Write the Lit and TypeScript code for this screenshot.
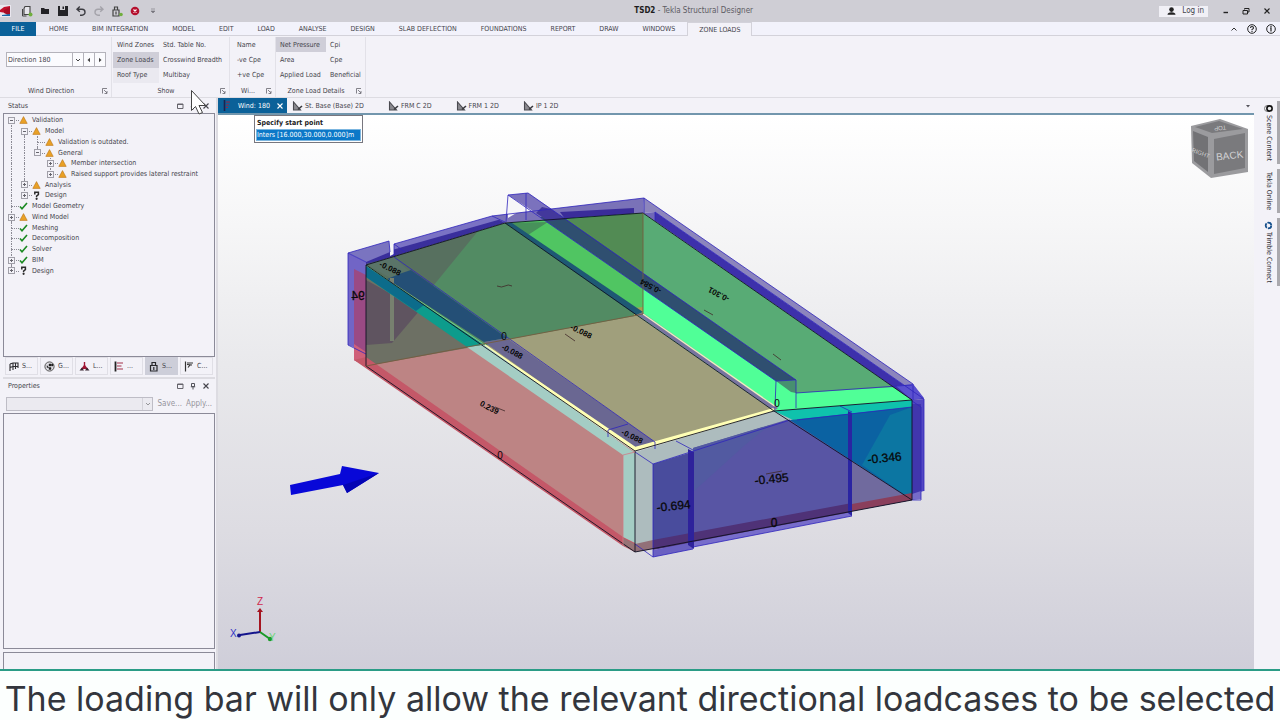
import { LitElement, html, svg, css, nothing } from "lit";
import { customElement, state } from "lit/decorators.js";
import { classMap } from "lit/directives/class-map.js";

type Mark = "warn" | "ok" | "query";
interface TreeRow {
  text: string;
  mark: Mark;
  toggle?: "+" | "-";
  // one entry per level: "|" runs through, "L" ends at this row, "T" starts at this row, " " is empty
  guides: string;
}

const TABS = ["HOME", "BIM INTEGRATION", "MODEL", "EDIT", "LOAD", "ANALYSE", "DESIGN", "SLAB DEFLECTION", "FOUNDATIONS", "REPORT", "DRAW", "WINDOWS", "ZONE LOADS"];
const DOCS = ["St. Base (Base) 2D", "FRM C 2D", "FRM 1 2D", "IP 1 2D"];

const TREE: TreeRow[] = [
  { text: "Validation", mark: "warn", toggle: "-", guides: "T" },
  { text: "Model", mark: "warn", toggle: "-", guides: "|T" },
  { text: "Validation is outdated.", mark: "warn", guides: "|||" },
  { text: "General", mark: "warn", toggle: "-", guides: "||L" },
  { text: "Member intersection", mark: "warn", toggle: "+", guides: "|| |" },
  { text: "Raised support provides lateral restraint", mark: "warn", toggle: "+", guides: "|| L" },
  { text: "Analysis", mark: "warn", toggle: "+", guides: "||" },
  { text: "Design", mark: "query", toggle: "+", guides: "|L" },
  { text: "Model Geometry", mark: "ok", guides: "|" },
  { text: "Wind Model", mark: "warn", toggle: "+", guides: "|" },
  { text: "Meshing", mark: "ok", guides: "|" },
  { text: "Decomposition", mark: "ok", guides: "|" },
  { text: "Solver", mark: "ok", guides: "|" },
  { text: "BIM", mark: "ok", toggle: "+", guides: "|" },
  { text: "Design", mark: "query", toggle: "+", guides: "L" },
];

const shared = css`
  * { box-sizing: border-box; }
  button, select, input {
    font: inherit;
    color: inherit;
    margin: 0;
    padding: 0;
    border: 0;
    border-radius: 0;
    background: none;
    appearance: none;
  }
  svg { display: block; flex: none; }
`;

const icon = {
  logo: svg`<svg width="11" height="12" viewBox="0 0 11 12"><rect width="11" height="12" fill="#e9e6ee"/><path d="M0 5l4-3 6-1v6l-4 1-6-1z" fill="#c2102c"/><path d="M4 5l6-3v7l-2 1-4-2z" fill="#a80c26"/><path d="M2 10l8-1v2H2z" fill="#1667a8"/></svg>`,
  newDoc: svg`<svg width="12" height="12" viewBox="0 0 12 12"><path d="M4 1.5h5v8H3v-6z" fill="#e6e5ea" stroke="#444" stroke-width="1.1"/><path d="M1.500 4v7h4" fill="none" stroke="#444"/><circle cx="9.500" cy="9.500" r="2" fill="#6fae3c"/></svg>`,
  open: svg`<svg width="12" height="12" viewBox="0 0 12 12"><path d="M2 3h3l1 1h4v5H2z" fill="#222226"/></svg>`,
  save: svg`<svg width="12" height="12" viewBox="0 0 12 12"><path d="M1 1h10v10H1z" fill="#242428"/><rect x="3" y="1" width="5" height="4" fill="#cfced4"/><rect x="5.500" y="1.500" width="1.500" height="2.500" fill="#242428"/></svg>`,
  undo: svg`<svg width="12" height="12" viewBox="0 0 12 12"><path d="M2 4.200h5a3 3 0 010 6H5M4.800 1.500L2 4.200l2.800 2.600" fill="none" stroke="#3c3c42" stroke-width="1.400"/></svg>`,
  redo: svg`<svg width="12" height="12" viewBox="0 0 12 12"><path d="M10 4.200H5a3 3 0 000 6h2M7.200 1.500L10 4.200 7.200 6.800" fill="none" stroke="#a4a3aa" stroke-width="1.400"/></svg>`,
  check: svg`<svg width="12" height="12" viewBox="0 0 12 12"><path d="M2 5h6v6H2zM3.500 5V2h3v3M5 6.500v3" fill="none" stroke="#444" stroke-width="1.200"/><circle cx="10" cy="9.500" r="1.800" fill="#6fae3c"/></svg>`,
  stop: svg`<svg width="12" height="12" viewBox="0 0 12 12"><circle cx="6" cy="6" r="4.300" fill="#b5102e"/><path d="M4.500 4.500l3 3m0-3l-3 3" stroke="#fff" stroke-width="1.100"/></svg>`,
  more: svg`<svg width="12" height="6" viewBox="-3 0 12 6"><path d="M1 1h4M1 3h4L3 5z" stroke="#77767e" stroke-width=".6" fill="#77767e"/></svg>`,
  user: svg`<svg width="9" height="8" viewBox="0 0 9 8"><circle cx="4.500" cy="2.600" r="2.300" fill="#222"/><path d="M.5 7.800q0-2.500 4-2.500t4 2.500z" fill="#222"/></svg>`,
  min: svg`<svg width="6" height="8" viewBox="0 0 6 8"><path d="M.5 5.500h4.500" stroke="#222" stroke-width="1.400"/></svg>`,
  restore: svg`<svg width="8" height="8" viewBox="0 0 8 8"><path d="M2.500 2.500v-1h4.500v3.500H5.500M1 3.500h4.500V7H1z" fill="none" stroke="#222"/></svg>`,
  close: svg`<svg width="8" height="8" viewBox="0 0 8 8"><path d="M1.500 1.500l5 5m0-5l-5 5" stroke="#222" stroke-width="1.100"/></svg>`,
  up: svg`<svg width="8" height="8" viewBox="0 0 8 8"><path d="M1.500 5.500L4 3l2.500 2.500" fill="none" stroke="#333"/></svg>`,
  help: svg`<svg width="10" height="10" viewBox="0 0 10 10"><circle cx="5" cy="5" r="4.300" fill="none" stroke="#222"/><path d="M3.500 4q0-1.500 1.500-1.500T6.500 4q0 .8-1.500 1.500v.7M5 7v1" fill="none" stroke="#222" stroke-width="1.100"/></svg>`,
  info: svg`<svg width="10" height="10" viewBox="0 0 10 10"><circle cx="5" cy="5" r="4.300" fill="none" stroke="#222"/><path d="M5 2v1.200M4.200 4.200H5v3.300" fill="none" stroke="#222" stroke-width="1.200"/></svg>`,
  launcher: svg`<svg width="6" height="6" viewBox="0 0 6 6"><path d="M.5 5.500v-5h4.500M2 2l3 3M5 3v2.500H2.500" fill="none" stroke="#66656d" stroke-width=".8"/></svg>`,
  chev: svg`<svg width="6" height="6" viewBox="0 0 6 6"><path d="M1 2l2 2 2-2" fill="none" stroke="#444" stroke-width="1"/></svg>`,
  prev: svg`<svg width="6" height="6" viewBox="0 0 6 6"><path d="M4 .8v4.400L1.500 3z" fill="#444"/></svg>`,
  next: svg`<svg width="6" height="6" viewBox="0 0 6 6"><path d="M2 .8v4.400L4.500 3z" fill="#444"/></svg>`,
  wind: svg`<svg width="9" height="11" viewBox="0 0 9 11"><path d="M1.500 0v11" stroke="#1d2350" stroke-width="1.600"/><path d="M3 2h4M3 5h3M3 7.500h2" stroke="#9c2340" stroke-width="1.200"/></svg>`,
  frame: svg`<svg width="11" height="10" viewBox="0 0 11 10"><path d="M1.500 1v8h7z" fill="#8b8a90" stroke="#4a4a50" stroke-width="1.100"/><path d="M6 8.500l4-3.500" stroke="#39393e" stroke-width="1.600"/></svg>`,
  dock: svg`<svg width="8" height="8" viewBox="0 0 8 8"><path d="M1.500 2h5.500v4.500H1.500zM1.500 2.500H7" fill="none" stroke="#66656d"/></svg>`,
  pin: svg`<svg width="8" height="8" viewBox="0 0 8 8"><path d="M2.500 1.500h3v3h-3zM1.800 4.800h4.400M4 5v2.500" fill="none" stroke="#55545c"/></svg>`,
  x: svg`<svg width="8" height="8" viewBox="0 0 8 8"><path d="M1.500 1.500l5 5m0-5l-5 5" stroke="#44434b" stroke-width="1.100"/></svg>`,
  drop: svg`<svg width="6" height="6" viewBox="0 0 6 6"><path d="M1 2h4L3 4.500z" fill="#55545c"/></svg>`,
  content: svg`<svg width="9" height="9" viewBox="0 0 9 9"><circle cx="3.500" cy="4.500" r="3" fill="none" stroke="#777"/><circle cx="5.500" cy="4.500" r="2.600" fill="#eee" stroke="#111" stroke-width="1.600"/></svg>`,
  trimble: svg`<svg width="9" height="9" viewBox="0 0 9 9"><circle cx="4.500" cy="4.500" r="2.800" fill="none" stroke="#15508c" stroke-width="1.800" stroke-dasharray="4.900 1"/></svg>`,
  tabStruct: svg`<svg width="10" height="11" viewBox="0 0 10 11"><path d="M1 3v7M4 2v7M1 3l3-1h5M4 5.500h5M6.500 2v6M9 1.500V7M1 6.500l3-1" fill="none" stroke="#2c2c30" stroke-width="1.100"/></svg>`,
  tabGroup: svg`<svg width="11" height="11" viewBox="0 0 11 11"><circle cx="5.500" cy="5.500" r="4.600" fill="#dcdbe1" stroke="#555"/><path d="M5 3h2v2H5zM7.500 3H9v2H7.500zM5 6.500h2v2H5zM3 4.500v2h2" fill="#222" stroke="#222" stroke-width=".4"/></svg>`,
  tabLoad: svg`<svg width="11" height="11" viewBox="0 0 11 11"><path d="M5.500 1v4" stroke="#a01634" stroke-width="1.400"/><path d="M5.500 3.500L9 8H2z" fill="#a01634"/><path d="M.5 9.500L3 6.500 5 9.500zM6 9.500l2-3 2.500 3z" fill="#3b2630"/></svg>`,
  tabWind: svg`<svg width="10" height="11" viewBox="0 0 10 11"><path d="M1.500 .5v10" stroke="#222" stroke-width="1.800"/><path d="M3 2h6M3 5h4.500M3 8h6" stroke="#a3304a" stroke-width="1.200"/></svg>`,
  tabStatus: svg`<svg width="10" height="11" viewBox="0 0 10 11"><path d="M1.500 4.500h6.500v5.500H1.500zM3 4.500v-3h3.500v3M4.800 6v3" fill="none" stroke="#28282c" stroke-width="1.200"/></svg>`,
  tabComp: svg`<svg width="10" height="11" viewBox="0 0 10 11"><path d="M1.500 .5v10M3 2h6M3 3.500l5 .5M4 6.500l2-2.500" fill="none" stroke="#333" stroke-width="1.200"/></svg>`,
  warn: svg`<svg width="9" height="8" viewBox="0 0 9 8"><path d="M4.500 .6L8.200 7.400H.8z" fill="#e9a126" stroke="#b9741a" stroke-width=".6"/></svg>`,
  ok: svg`<svg width="9" height="8" viewBox="0 0 9 8"><path d="M1 4.500l2 2.300L8 1" fill="none" stroke="#1b8a22" stroke-width="1.600"/></svg>`,
  query: svg`<svg width="9" height="9" viewBox="0 0 9 9"><path d="M2.800 3.400V1.300h3.600v2.300L4.600 5v1.200" fill="none" stroke="#2b2b2b" stroke-width="1.500"/><circle cx="4.600" cy="7.800" r="1.100" fill="#2b2b2b"/></svg>`,
};

@customElement("ribbon-bar")
class RibbonBar extends LitElement {
  @state() private tab = "ZONE LOADS";

  static styles = [shared, css`
    :host { display: block; color: #45444c; }
    .tabs { display: flex; height: 14px; background: #f2f2fb; border-bottom: 1px solid #d3d2da; }
    .tab { padding: 0 12px; line-height: 14px; height: 14px; white-space: nowrap; }
    .tab.file { width: 36px; padding: 0; background: #0b6199; color: #fff; margin-right: 1px; }
    .tab.on { background: #f3f2f8; border: 1px solid #d3d2da; border-bottom: 0; padding: 0 11px; }
    .tools { margin-left: auto; display: flex; align-items: center; gap: 9px; padding-right: 4px; }
    .ribbon { display: flex; height: 62px; background: #f3f2f8; border-bottom: 1px solid #dddce2; padding-top: 1px; }
    .group { display: flex; flex-direction: column; border-right: 1px solid #e2e1e8; }
    .cells { flex: none; display: grid; height: 46px; grid-template-rows: repeat(3, 1fr); grid-auto-flow: column; }
    .cells button { text-align: left; padding: 0 4px; white-space: nowrap; }
    .cells button.on { background: #cfced8; }
    .cells button.soft { background: #eae9f0; }
    .foot { flex: 1; display: flex; align-items: center; padding: 2px 3px 0 0; }
    .foot span { flex: 1; text-align: center; white-space: nowrap; }
    .direction { width: 112px; }
    .show { width: 118px; }
    .show .cells { grid-template-columns: 46px 70px; padding-left: 1px; }
    .wi { width: 46px; }
    .wi .cells { padding-left: 3px; }
    .details { width: 90px; }
    .details .cells { grid-template-columns: 50px 39px; }
    .combo { display: flex; height: 15px; margin: 15px 5px 16px 6px; border: 1px solid #b4b3bb; background: #fbfbfe; }
    .combo select { flex: 1; min-width: 0; padding: 0 1px; }
    .combo .arrow { width: 11px; border-left: 1px solid #b4b3bb; display: grid; place-items: center; }
  `];

  private cell(label: string, cls = "") {
    return html`<button class=${cls}>${label}</button>`;
  }

  private foot(label: string) {
    return html`<div class="foot"><span>${label}</span><button aria-label="${label} options">${icon.launcher}</button></div>`;
  }

  render() {
    return html`
      <nav class="tabs">
        <button class="tab file">FILE</button>
        ${TABS.map((t) => html`<button class=${classMap({ tab: true, on: t === this.tab })} @click=${() => (this.tab = t)}>${t}</button>`)}
        <div class="tools">
          <button aria-label="Collapse ribbon">${icon.up}</button>
          <button aria-label="Help">${icon.help}</button>
          <button aria-label="About">${icon.info}</button>
        </div>
      </nav>
      <div class="ribbon">
        <section class="group direction">
          <div class="combo">
            <select aria-label="Wind direction"><option>Direction 180</option></select>
            <span class="arrow">${icon.chev}</span>
            <button class="arrow" aria-label="Previous">${icon.prev}</button>
            <button class="arrow" aria-label="Next">${icon.next}</button>
          </div>
          ${this.foot("Wind Direction")}
        </section>
        <section class="group show">
          <div class="cells">
            ${this.cell("Wind Zones")}${this.cell("Zone Loads", "on")}${this.cell("Roof Type", "soft")}
            ${this.cell("Std. Table No.")}${this.cell("Crosswind Breadth")}${this.cell("Multibay")}
          </div>
          ${this.foot("Show")}
        </section>
        <section class="group wi">
          <div class="cells">${this.cell("Name")}${this.cell("-ve Cpe")}${this.cell("+ve Cpe")}</div>
          ${this.foot("Wi...")}
        </section>
        <section class="group details">
          <div class="cells">
            ${this.cell("Net Pressure", "on")}${this.cell("Area")}${this.cell("Applied Load")}
            ${this.cell("Cpi")}${this.cell("Cpe")}${this.cell("Beneficial")}
          </div>
          ${this.foot("Zone Load Details")}
        </section>
      </div>`;
  }
}

@customElement("side-panels")
class SidePanels extends LitElement {
  static styles = [shared, css`
    :host { display: flex; flex-direction: column; background: #f3f2f8; color: #45444c; padding: 0 1px 0 3px; border-right: 2px solid #dddce2; overflow: hidden; }
    .head { flex: none; display: flex; align-items: center; gap: 5px; height: 15px; padding: 0 5px; }
    .head h2 { flex: 1; margin: 0; font: inherit; }
    .box { border: 1px solid #8b8a98; background: #f3f2f8; }
    .status { flex: 0 1 244px; }
    .tree { list-style: none; margin: 0; padding: 1px 0 0 2px; height: 162px; display: grid; grid-auto-rows: 1fr; }
    .row { display: flex; align-items: stretch; }
    .guide { width: 13px; display: grid; grid-template-rows: 1fr 1fr; flex: none; position: relative; }
    .guide i { margin-left: 5px; border-left: 1px dotted #8c8b95; }
    .guide .none { border-color: transparent; }
    .guide.leaf::after { content: ""; position: absolute; left: 6px; right: 0; top: 50%; border-top: 1px dotted #8c8b95; }
    .toggle { position: absolute; z-index: 1; left: 2px; top: 2px; width: 7px; height: 7px; border: 1px solid #a09fa8; background: #f3f2f8; }
    .toggle::before { content: ""; position: absolute; left: 1px; right: 1px; top: 2px; height: 1px; background: #66656d; }
    .toggle.plus::after { content: ""; position: absolute; top: 1px; bottom: 1px; left: 2px; width: 1px; background: #66656d; }
    .mark { width: 9px; display: grid; place-items: center; flex: none; }
    .label { padding-left: 4px; align-self: center; white-space: nowrap; line-height: 10px; }
    .strip { flex: none; display: grid; grid-template-columns: repeat(6, 1fr); gap: 2px; padding: 0 2px; height: 18px; margin-bottom: 2px; }
    .strip button { display: flex; align-items: center; gap: 3px; padding: 0 3px; border: 1px solid #e0dfe6; white-space: nowrap; overflow: hidden; }
    .strip button.on { background: #cdced9; border-color: #cdced9; }
    .props { border-top: 2px solid #dddce2; flex: none; }
    .props .head { height: 14px; }
    .pick { display: flex; align-items: center; gap: 4px; height: 14px; margin: 4px 3px 2px; color: #96959d; }
    .pick .combo { flex: 1; height: 14px; display: flex; align-items: center; border: 1px solid #bebdc6; background: #ebeaf0; }
    .pick button { font-size: 8px; }
    .combo select { flex: 1; min-width: 0; height: 12px; }
    .combo span { border-left: 1px solid #bebdc6; width: 10px; height: 12px; display: grid; place-items: center; opacity: .5; }
    .grid { flex: 1 1 0; }
    .hint { flex: none; height: 17px; margin-top: 3px; border-bottom: 0; }
  `];

  private row(r: TreeRow) {
    const last = r.guides.length - 1;
    return html`<li class="row">
      ${[...r.guides].map((g, i) => html`<span class="guide ${i === last ? "leaf" : ""}">
        <i class=${g === " " || g === "T" ? "none" : ""}></i>
        <i class=${g === " " || g === "L" ? "none" : ""}></i>
        ${i === last && r.toggle ? html`<button class="toggle ${r.toggle === "+" ? "plus" : ""}" aria-label="Toggle ${r.text}"></button>` : nothing}
      </span>`)}
      <span class="mark">${icon[r.mark]}</span>
      <span class="label">${r.text}</span>
    </li>`;
  }

  render() {
    const tabs: [keyof typeof icon, string][] = [["tabStruct", "S..."], ["tabGroup", "G..."], ["tabLoad", "L..."], ["tabWind", "..."], ["tabStatus", "S..."], ["tabComp", "C..."]];
    return html`
      <header class="head"><h2>Status</h2><button aria-label="Maximise">${icon.dock}</button><button aria-label="Pin">${icon.pin}</button><button aria-label="Close">${icon.x}</button></header>
      <div class="box status"><ul class="tree">${TREE.map((r) => this.row(r))}</ul></div>
      <div class="strip">${tabs.map(([k, t], i) => html`<button class=${i === 4 ? "on" : ""}>${icon[k]}<span>${t}</span></button>`)}</div>
      <div class="props">
        <header class="head"><h2>Properties</h2><button aria-label="Maximise">${icon.dock}</button><button aria-label="Pin">${icon.pin}</button><button aria-label="Close">${icon.x}</button></header>
        <div class="pick">
          <div class="combo"><select aria-label="Property set" disabled></select><span>${icon.chev}</span></div>
          <button disabled>Save...</button><button disabled>Apply...</button>
        </div>
      </div>
      <div class="box grid"></div>
      <div class="box hint"></div>`;
  }
}

@customElement("model-view")
class ModelView extends LitElement {
  static styles = [shared, css`
    :host { display: block; position: relative; overflow: hidden; background: linear-gradient(#ffffff, #f6f6f7 20%, #e9e9ec 45%, #dddce2 75%, #cfced9); }
    .scene { width: 100%; height: 100%; }
    .prompt { position: absolute; left: 36px; top: 0; width: 109px; padding: 1px; border: 1px solid #77767e; background: #fff; color: #222; line-height: 12px; display: grid; }
    .prompt label { padding-left: 1px; height: 12px; font-weight: bold; white-space: nowrap; }
    .prompt input { width: 100%; height: 12px; padding: 0; background: #0b78c8; color: #fff; border: 1px solid #7cb6e0; }
    .num { font-family: "Liberation Sans", Arial, sans-serif; fill: #080808; text-anchor: middle; }
    .big { font-size: 12px; stroke: #080808; stroke-width: .3; }
    .small { font-size: 8px; font-weight: bold; }
    .thin { font-weight: normal; font-size: 10px; }
    .axis { font-family: "Liberation Sans", Arial, sans-serif; font-size: 10px; }
    .cube { font-family: "Liberation Sans", Arial, sans-serif; fill: #d2d2d4; text-anchor: middle; }
    .face { font-size: 10px; }
    .side { font-size: 6px; }
    .edge { fill: none; stroke: #2f25bd; stroke-width: .8; }
    .hard { fill: none; stroke: #111122; stroke-width: .9; }
  `];

  private building() {
    return svg`
      <!-- outer suction boxes behind the roof -->
      <path d="M394 244L492 216 505 222 366 264 366 260 389 252z" fill="#7a72c4"/>
      <path d="M392 250L505 218V223L366 265V261z" fill="#3a2f9c"/>
      <path d="M348 253L389 241 390 252 366 262z" fill="#7a74c0"/>
      <path d="M348 253L366 262V352L348 345z" fill="#7165c6"/>
      <path d="M354 269L366 275V366L354 360z" fill="#9a4a84"/>
      <path d="M354 344L366 352V366L354 360z" fill="#d0607a"/>
      <path d="M390 241H394V254L390 256z" fill="#f4f4f6"/>
      <path d="M492 216L644 198 643 214 505 223z" fill="#7a72b8"/>
      <path d="M560 212L634 208V214L565 219z" fill="#3a2c9a"/>
      <path d="M508 195L526 194 526 207 508 218z" fill="#f6f6f8"/>

      <!-- windward roof over rear wall and floor -->
      <path d="M366 265L505 223 774 411 635 451z" fill="#a09f7c"/>
      <path d="M366 265L505 223 640 315 500 341 484 346z" fill="#528b63"/>
      <path d="M366 265L478 231 420 302z" fill="#57705f"/>

      <!-- leeward roof -->
      <path d="M505 223L643 213 912 400 774 411z" fill="#50ff97"/>
      <path d="M505 223L643 213V315z" fill="#50c562"/>
      <path d="M505 223L548 222 528 235z" fill="#47915a"/>
      <path d="M548 221L643 213V288z" fill="#528b54"/>
      <path d="M643 213L912 400 912 386 796 393 643 288z" fill="#58ab75"/>
      <path d="M634 308L643 307V315L634 316z" fill="#a8a050"/>

      <!-- ridge strips -->
      <path d="M636 314L643 313 778 408 774 411z" fill="#78739f"/>
      <path d="M505 223L512 223 643 312 636 315z" fill="#1e5874"/>
      <path d="M643 314L776 407" stroke="#f1efc0" stroke-width="1.300"/>
      <path d="M508 195L528 193 560 215 545 219z" fill="#7b72bd"/>
      <path d="M540 217L560 215 796 380 776 381z" fill="#2f4f70"/>
      <path d="M776 381H796L796 393 791 392z" fill="#478f70"/>
      <path d="M542 207L551 209 565 219 548 221 536 213z" fill="#43389c"/>

      <!-- eave suction box on the far side -->
      <path d="M644 198L913 384 924 399 655 212 643 213z" fill="#8c85bd"/>
      <path d="M643 213L655 212V221z" fill="#6f67b8"/>
      <path d="M655 212L924 399 912 400 655 221z" fill="#3d30ab"/>
      <path d="M896 386L913 384 924 398 912 400z" fill="#5a50cf"/>

      <!-- windward eave strip -->
      <path d="M366 264L394 257 411 273 392 279z" fill="#5a7468"/>
      <path d="M387 279L402 273 411 270 507 338 484 342z" fill="#244f76"/>
      <path d="M484 342L507 338 655 442 635 449z" fill="#6a6792"/>
      <path d="M366 266L484 345" stroke="#7fd086" stroke-width="2"/>
      <path d="M484 346L635 449 774 410" fill="none" stroke="#ffffb5" stroke-width="4"/>

      <!-- windward wall -->
      <path d="M366 268L635 452V552L366 366z" fill="#bd8484"/>
      <path d="M366 268L484 345 366 366z" fill="#6d7064"/>
      <path d="M366 280L420 310 392 343 366 345z" fill="#5f5460"/>
      <path d="M390 278H394V341H390z" fill="#77806f"/>
      <path d="M366 266L484 345 467 347 366 277z" fill="#0d9c8c"/>
      <path d="M366 266L424 305 416 311 366 277z" fill="#0c6c8b"/>
      <path d="M484 345L635 453V552L623 545V455L467 347z" fill="#a4cdc4"/>
      <path d="M354 360L366 357 623 537 635 543V552L623 546z" fill="#c45868"/>
      <path d="M623 538L635 544V552L623 545z" fill="#977376"/>

      <!-- gable wall -->
      <path d="M635 452L774 411 912 400V500L635 552z" fill="#adbcbe"/>
      <path d="M635 544L653 540V549L635 552z" fill="#927078"/>
      <path d="M774 411L912 400V410L793 420z" fill="#0fc2ac"/>
      <path d="M653 464L689 453V545L653 549z" fill="#494c9d"/>
      <path d="M693 448L786 420 797 420 912 500 693 541z" fill="#5855a4"/>
      <path d="M693 448L770 425 745 445 693 492z" fill="#525aa1"/>
      <path d="M852 458L912 500 852 511z" fill="#706a9e"/>
      <path d="M790 420L912 407V500z" fill="#0b62a2"/>
      <path d="M912 407V500L862 465 890 415z" fill="#0c76a2"/>
      <path d="M653 540L852 503V514L653 550z" fill="#4f3277"/>
      <path d="M852 504L912 493V500L852 511z" fill="#8a3f5c"/>
      <path d="M653 550L693 542V549L653 557z" fill="#6a60c2"/>
      <path d="M693 542L852 512V516L693 547z" fill="#776dcb"/>
      <path d="M688 449L694 452V549L688 545z" fill="#2e229b"/>
      <path d="M848 411L852 413V516L848 513z" fill="#2a24a2"/>
      <path d="M912 400L924 399V491L912 494z" fill="#5348c2"/>
      <path d="M912 404H921V492L912 495z" fill="#4136ad"/>
      <path d="M912 494L921 491V499L912 500z" fill="#756bc9"/>

      <!-- outlines -->
      <path class="edge" d="M348 345V253L389 241 390 252M348 253L366 262M348 345L366 354M394 256V244L492 216 505 222M492 216L644 198V213M394 244L405 252M508 195L506 222M508 195L528 193 796 380V408M508 195L776 381 775 408M526 193V220M776 381L796 380M796 393L912 385M644 198L913 384V400M655 221V212L924 399V491M394 257L655 442V449M608 430L628 424M608 430V437"/>
      <path class="edge" d="M635 452L653 464V557L635 544M653 464L790 420M676 441L693 450M653 557L693 549M693 547L852 516M797 420L912 407M840 406L852 412M912 500H921V407L912 401"/>
      <path class="hard" d="M366 366V265L505 223 643 213 912 400V500L635 552 366 366M366 265L635 451 774 411 912 400M635 451V552M505 223L774 411 912 500"/>
      <path d="M366 366L643 314V213" fill="none" stroke="#755c40" stroke-width=".9"/>
      <path d="M623 546V455L635 452" fill="none" stroke="#cf7b85" stroke-width=".8"/>
      <path d="M497 286q5 2 8 0t7 0M565 334l10 7M704 310l9 5M773 354l8 6M766 474l16-3M495 407l10 4" fill="none" stroke="#402828" stroke-width=".8"/>`;
  }

  render() {
    return html`
      <svg class="scene" viewBox="218 115 1036 554" preserveAspectRatio="xMidYMid slice" role="img" aria-label="Wind zone model">
        ${this.building()}
        <g class="num small">
          <text transform="translate(389 271) rotate(26)">-0.088</text>
          <text transform="translate(511 354) rotate(28)">-0.088</text>
          <text transform="translate(580 334) rotate(26)">-0.088</text>
          <text transform="translate(631 439) rotate(26)">-0.088</text>
          <text transform="translate(488 410) rotate(28)">0.239</text>
          <text transform="translate(652 284) rotate(208)">-0.584</text>
          <text transform="translate(720 292) rotate(208)">-0.301</text>
          <text class="thin" x="500" y="459">0</text>
          <text class="thin" x="504" y="340">0</text>
          <text class="thin" x="777" y="407">0</text>
        </g>
        <g class="num big">
          <text transform="translate(674 510) rotate(-6)">-0.694</text>
          <text transform="translate(772 483) rotate(-6)">-0.495</text>
          <text transform="translate(885 462) rotate(-6)">-0.346</text>
          <text x="774" y="527">0</text>
          <text transform="translate(358 300) scale(-1 1)">94</text>
        </g>
        <path d="M290 485L340 474 342 466 379 473 347 493 343 485 291 495z" fill="#0808d8"/>
        <path d="M290 485l3 10M343 485l4 8 32-20z" fill="#0404b4"/>
        <path d="M260 632V611" stroke="#a51420" stroke-width="2"/><path d="M257 612l3-4 3 4z" fill="#a51420"/>
        <path d="M260 632L240 635" stroke="#14148c" stroke-width="2"/><circle cx="239" cy="635.500" r="2" fill="#14148c"/>
        <path d="M260 632L270 639" stroke="#1a9a28" stroke-width="2"/><circle cx="270" cy="639" r="2.200" fill="#1a9a28"/>
        <text class="axis" x="257" y="605" fill="#d0284c">Z</text>
        <text class="axis" x="230" y="637" fill="#3434c4">X</text>
        <text class="axis" x="269" y="641" fill="#6fd67a">Y</text>
        <path d="M1191 126L1220 119 1248 129V172L1211 178 1192 163z" fill="#9b9b9e"/>
        <path d="M1195 127L1219 121 1243 129 1212 133z" fill="#7a7a7d"/>
        <path d="M1193 131L1208 137V172L1194 161z" fill="#727275"/>
        <path d="M1214 139L1245 133V168L1214 174z" fill="#7a7a7d"/>
        <text class="cube face" transform="translate(1230 159) rotate(-6)">BACK</text>
        <text class="cube side" transform="translate(1200 155) rotate(20)">RIGHT</text>
        <text class="cube side" transform="translate(1220 126) rotate(174)">TOP</text>
      </svg>
      <div class="prompt"><label for="pt">Specify start point</label><input id="pt" value="Inters [16.000,30.000,0.000]m" /></div>`;
  }
}

@customElement("app-root")
class AppRoot extends LitElement {
  static styles = [shared, css`
    :host { display: flex; flex-direction: column; height: 100vh; overflow: hidden; position: relative; background: #f3f2f8; font: 7px/10px "DejaVu Sans Condensed", "Noto Sans", sans-serif; color: #45444c; }
    .title { flex: none; height: 22px; background: #cfced5; display: flex; align-items: center; }
    .quick { display: flex; align-items: center; gap: 6px; width: 228px; }
    .quick button:first-child { margin-right: 4px; }
    .title h1 { flex: 1; margin: 0; font: inherit; font-size: 8px; text-align: center; color: #5d5c64; }
    .title b { color: #1c1c20; }
    .win { display: flex; align-items: center; gap: 13px; padding-right: 9px; }
    .login { display: flex; align-items: center; gap: 6px; height: 11px; padding: 0 4px 0 8px; margin-right: 2px; background: #f1f0f6; font-size: 8px; white-space: nowrap; }
    ribbon-bar { flex: none; }
    .body { flex: 1; min-height: 0; display: flex; }
    side-panels { width: 218px; flex: none; }
    .main { flex: 1; min-width: 0; display: flex; flex-direction: column; }
    .docs { flex: none; display: flex; align-items: stretch; height: 17px; border-bottom: 2px solid #7296ad; padding-right: 3px; }
    .doc { display: flex; align-items: center; gap: 2px; padding: 0 12px 0 0; margin-right: 12px; white-space: nowrap; }
    .doc.on { background: #0b6199; color: #fff; padding: 0 3px 0 5px; gap: 6px; margin-right: 5px; }
    .doc.on svg:last-child { filter: invert(1) brightness(2); }
    .docs .list { margin-left: auto; }
    model-view { flex: 1; min-height: 0; }
    .rail { flex: none; width: 26px; display: flex; flex-direction: column; align-items: flex-end; gap: 5px; padding-top: 3px; }
    .rail button { width: 20px; display: flex; flex-direction: column; align-items: center; justify-content: center; gap: 2px; padding: 3px 0; border-right: 3px solid #aaa9ae; color: #33333a; }
    .rail span { writing-mode: vertical-rl; white-space: nowrap; line-height: 10px; }
    .caption { flex: none; height: 51px; border-top: 2px solid #2a9c86; background: #fcfffe; color: #33363d; font: 34px/56px Inter, "Noto Sans", sans-serif; text-align: center; white-space: nowrap; overflow: hidden; margin: 0; }
    .pointer { position: absolute; left: 190px; top: 89px; }
  `];

  render() {
    return html`
      <header class="title">
        <div class="quick">
          <button aria-label="Application">${icon.logo}</button>
          ${(["newDoc", "open", "save", "undo", "redo", "check", "stop", "more"] as const).map((k) => html`<button aria-label=${k}>${icon[k]}</button>`)}
        </div>
        <h1><b>TSD2</b> - Tekla Structural Designer</h1>
        <div class="win">
          <button class="login">${icon.user}<span>Log in</span></button>
          <button aria-label="Minimise">${icon.min}</button>
          <button aria-label="Restore">${icon.restore}</button>
          <button aria-label="Close">${icon.close}</button>
        </div>
      </header>
      <ribbon-bar></ribbon-bar>
      <div class="body">
        <side-panels></side-panels>
        <main class="main">
          <div class="docs">
            <button class="doc on">${icon.wind}<span>Wind: 180</span>${icon.x}</button>
            ${DOCS.map((d) => html`<button class="doc">${icon.frame}<span>${d}</span></button>`)}
            <button class="list" aria-label="All views">${icon.drop}</button>
          </div>
          <model-view></model-view>
        </main>
        <aside class="rail">
          <button>${icon.content}<span>Scene Content</span></button>
          <button><span>Tekla Online</span></button>
          <button>${icon.trimble}<span>Trimble Connect</span></button>
        </aside>
      </div>
      <p class="caption">The loading bar will only allow the relevant directional loadcases to be selected</p>
      <svg class="pointer" width="18" height="28" viewBox="0 0 18 28"><path d="M1.500 1.500v20l4-4 3.500 7.500 3.500-1.500-3.500-7h6.500z" fill="#fff" stroke="#444" stroke-width="1"/></svg>`;
  }
}
